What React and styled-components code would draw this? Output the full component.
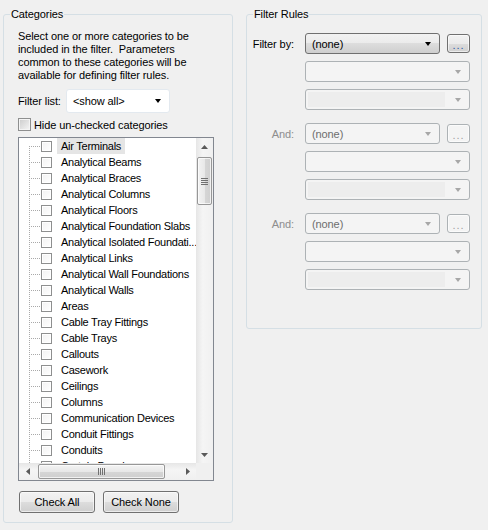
import styled, { createGlobalStyle } from 'styled-components';

const GlobalStyle = createGlobalStyle`
  html, body {
    margin: 0;
    padding: 0;
    background: #f0f0f0;
  }
  body {
    font-family: "Liberation Sans", Arial, sans-serif;
    font-size: 11px;
    letter-spacing: -0.1px;
    color: #000;
  }
`;

const Page = styled.div`
  width: 488px;
  height: 530px;
  box-sizing: border-box;
  padding: 8px 0 0 3px;

  display: flex;
  align-items: flex-start;
  gap: 13px;
`;

const Group = styled.fieldset`
  margin: 0;
  padding: 0;
  min-width: 0;
  box-sizing: border-box;
  width: ${props => props.$width}px;
  height: ${props => props.$height}px;
  border: 1px solid #d5dfe5;
  border-radius: 3px;
`;

const Legend = styled.legend`
  margin-left: 6px;
  padding: 0 1px;
  font-size: 11px;
  line-height: 13px;
  color: #000;
`;

const LeftBody = styled.div`
  padding: 9px 0 0 14px;
  display: flex;
  flex-direction: column;
`;

const Description = styled.div`
  line-height: 13px;
  white-space: pre;
`;

const FilterRow = styled.div`
  margin-top: 7px;
  display: grid;
  grid-template-columns: 48px 104px;
  align-items: center;
`;

const Combo = styled.div`
  box-sizing: border-box;
  height: ${props => props.$height || 21}px;
  display: flex;
  align-items: center;
  justify-content: space-between;
  padding: 0 8px 0 6px;
  border-radius: 3px;
  white-space: nowrap;

  ${props =>
    props.$variant === 'plain' &&
    `
    background: #ffffff;
    border: 1px solid #e3e9ef;
  `}
  ${props =>
    props.$variant === 'button' &&
    `
    background: linear-gradient(#f2f2f2 0%, #ebebeb 50%, #dddddd 50%, #cfcfcf 100%);
    border: 1px solid #707070;
  `}
  ${props =>
    props.$variant === 'disabled' &&
    `
    background: #f4f4f4;
    border: 1px solid #adb2b5;
    color: #6d6d6d;
  `}
  ${props =>
    props.$variant === 'edit' &&
    `
    background: #f4f4f4;
    border: 1px solid #adb2b5;
    padding: 2px 8px 2px 2px;
  `}
`;

const EditField = styled.div`
  align-self: stretch;
  flex: 1;
  margin-right: 10px;
  background: #ededed;
`;

const Arrow = styled.span`
  width: 0;
  height: 0;
  border-left: 3.5px solid transparent;
  border-right: 3.5px solid transparent;
  border-top: 4px solid ${props => (props.$disabled ? '#a7a7a7' : '#000')};
`;

const CheckRow = styled.label`
  margin-top: 5px;
  display: flex;
  align-items: center;
  gap: 3px;
  height: 13px;
`;

const Box = styled.span`
  box-sizing: border-box;
  display: inline-block;
  flex: none;
  width: ${props => props.$size}px;
  height: ${props => props.$size}px;
  border: 1px solid #8e8f8f;
  background: ${props =>
    props.$shaded
      ? 'linear-gradient(135deg, #cbcbcb, #f6f6f6)'
      : 'linear-gradient(135deg, #f2f2f2, #ffffff)'};
  box-shadow: inset 0 0 0 1px ${props => (props.$shaded ? '#f4f4f4' : '#ffffff')};
`;

const Tree = styled.div`
  margin-top: 6px;
  box-sizing: border-box;
  width: 196px;
  height: 344px;
  border: 1px solid #828790;
  background: #ffffff;

  display: grid;
  grid-template-columns: 1fr 17px;
  grid-template-rows: 1fr 17px;
  overflow: hidden;
`;

const TreeList = styled.ul`
  margin: 0;
  padding: 0;
  list-style: none;
  overflow: hidden;
`;

const TreeRow = styled.li`
  height: 16px;
  display: flex;
  align-items: center;
  white-space: nowrap;
  letter-spacing: -0.25px;
`;

const Connector = styled.span`
  flex: none;
  margin-left: 10px;
  width: 12px;
  height: 16px;
  background:
    repeating-linear-gradient(to bottom, #a9a9a9 0 1px, transparent 1px 2px)
      left ${props => (props.$first ? '8px' : '0')} / 1px 100% no-repeat,
    repeating-linear-gradient(to right, #a9a9a9 0 1px, transparent 1px 2px)
      left 8px / 11px 1px no-repeat;
`;

const ItemLabel = styled.span`
  margin-left: 5px;
  padding: 2px 4px 1px 4px;
  line-height: 13px;
  background: ${props => (props.$selected ? '#e5e5e5' : 'transparent')};
`;

const VScroll = styled.div`
  display: flex;
  flex-direction: column;
  align-items: center;
  background: linear-gradient(to right, #e6e6e6, #f5f5f5 40%, #f0f0f0);
`;

const HScroll = styled.div`
  display: flex;
  align-items: center;
  background: linear-gradient(#e6e6e6, #f5f5f5 40%, #f0f0f0);
`;

const Corner = styled.div`
  background: #f0f0f0;
`;

const ScrollArrow = styled.div`
  flex: none;
  width: 17px;
  height: 17px;
  display: flex;
  align-items: center;
  justify-content: center;
`;

const Thumb = styled.div`
  box-sizing: border-box;
  display: flex;
  align-items: center;
  justify-content: center;
  border: 1px solid #979797;
  border-radius: 2px;
  ${props =>
    props.$vertical
      ? `
    width: 15px;
    height: 48px;
    margin-top: 2px;
    background: linear-gradient(to right, #f3f3f3, #e8e8e8 50%, #d6d6d6 50%, #cfcfcf);
  `
      : `
    width: 127px;
    height: 15px;
    margin-left: 2px;
    background: linear-gradient(#f3f3f3, #e8e8e8 50%, #d6d6d6 50%, #cfcfcf);
  `}
  box-shadow: inset 0 0 0 1px rgba(255, 255, 255, 0.7);
`;

const Spacer = styled.div`
  flex: 1;
`;

const ButtonRow = styled.div`
  margin: 10px 0 0 1px;
  display: flex;
  gap: 8px;
`;

const Button = styled.button`
  box-sizing: border-box;
  width: ${props => props.$width || 76}px;
  height: ${props => props.$height || 22}px;
  padding: 0;
  font-family: inherit;
  font-size: 11px;
  letter-spacing: inherit;
  color: ${props => (props.$disabled ? '#838383' : '#000')};
  border: 1px solid ${props => (props.$disabled ? '#adb2b5' : '#707070')};
  border-radius: 3px;
  background: ${props =>
    props.$disabled
      ? '#f4f4f4'
      : 'linear-gradient(#f2f2f2 0%, #ebebeb 50%, #dddddd 50%, #cfcfcf 100%)'};
  box-shadow: inset 0 0 0 1px rgba(255, 255, 255, 0.6);
  line-height: 1;
`;

const RulesBody = styled.div`
  padding: 12px 10px 0 5px;
  display: flex;
  flex-direction: column;
  gap: 13px;
`;

const RuleBlock = styled.div`
  display: grid;
  grid-template-columns: 46px 135px 23px;
  column-gap: 7px;
  row-gap: 7px;
  align-items: center;
`;

const RuleLabel = styled.span`
  text-align: right;
  padding-right: 4px;
  color: ${props => (props.$disabled ? '#8d8d8d' : '#000')};
  white-space: nowrap;
`;

const Wide = styled.div`
  grid-column: 2 / 4;
`;

const Dots = styled.span`
  letter-spacing: 1px;
  color: ${props => (props.$disabled ? '#a0a0a0' : '#2a5ba8')};
  position: relative;
  top: 2px;
`;

const categories = [
  'Air Terminals',
  'Analytical Beams',
  'Analytical Braces',
  'Analytical Columns',
  'Analytical Floors',
  'Analytical Foundation Slabs',
  'Analytical Isolated Foundati...',
  'Analytical Links',
  'Analytical Wall Foundations',
  'Analytical Walls',
  'Areas',
  'Cable Tray Fittings',
  'Cable Trays',
  'Callouts',
  'Casework',
  'Ceilings',
  'Columns',
  'Communication Devices',
  'Conduit Fittings',
  'Conduits',
  'Curtain Panels',
];

const description = [
  'Select one or more categories to be',
  'included in the filter.  Parameters',
  'common to these categories will be',
  'available for defining filter rules.',
].join('\n');

function Triangle({ dir }) {
  const points = {
    up: '0,4 7,4 3.5,0',
    down: '0,0 7,0 3.5,4',
    left: '4,0 4,7 0,3.5',
    right: '0,0 0,7 4,3.5',
  }[dir];
  const vertical = dir === 'up' || dir === 'down';
  return (
    <svg width={vertical ? 7 : 4} height={vertical ? 4 : 7}>
      <polygon points={points} fill="#5a5a5a" />
    </svg>
  );
}

function Grip({ vertical }) {
  return vertical ? (
    <svg width="7" height="7">
      {[0, 2, 4, 6].map(y => (
        <rect key={y} x="0" y={y} width="7" height="1" fill="#707070" />
      ))}
    </svg>
  ) : (
    <svg width="7" height="7">
      {[0, 2, 4, 6].map(x => (
        <rect key={x} x={x} y="0" width="1" height="7" fill="#707070" />
      ))}
    </svg>
  );
}

function RuleSet({ label, disabled }) {
  return (
    <RuleBlock>
      <RuleLabel $disabled={disabled}>{label}</RuleLabel>
      <Combo $variant={disabled ? 'disabled' : 'button'}>
        <span>(none)</span>
        <Arrow $disabled={disabled} />
      </Combo>
      <Button $width={23} $height={19} $disabled={disabled}>
        <Dots $disabled={disabled}>...</Dots>
      </Button>
      <span />
      <Wide>
        <Combo $variant="disabled">
          <span />
          <Arrow $disabled />
        </Combo>
      </Wide>
      <span />
      <Wide>
        <Combo $variant="edit">
          <EditField />
          <Arrow $disabled />
        </Combo>
      </Wide>
    </RuleBlock>
  );
}

export default function App() {
  return (
    <>
      <GlobalStyle />
      <Page>
        <Group $width={230} $height={515}>
          <Legend>Categories</Legend>
          <LeftBody>
            <Description>{description}</Description>
            <FilterRow>
              <span>Filter list:</span>
              <Combo $variant="plain" $height={24}>
                <span>&lt;show all&gt;</span>
                <Arrow />
              </Combo>
            </FilterRow>
            <CheckRow>
              <Box $size={13} $shaded />
              <span>Hide un-checked categories</span>
            </CheckRow>
            <Tree>
              <TreeList>
                {categories.map((name, index) => (
                  <TreeRow key={name}>
                    <Connector $first={index === 0} />
                    <Box $size={11} />
                    <ItemLabel $selected={index === 0}>{name}</ItemLabel>
                  </TreeRow>
                ))}
              </TreeList>
              <VScroll>
                <ScrollArrow>
                  <Triangle dir="up" />
                </ScrollArrow>
                <Thumb $vertical>
                  <Grip vertical />
                </Thumb>
                <Spacer />
                <ScrollArrow>
                  <Triangle dir="down" />
                </ScrollArrow>
              </VScroll>
              <HScroll>
                <ScrollArrow>
                  <Triangle dir="left" />
                </ScrollArrow>
                <Thumb>
                  <Grip />
                </Thumb>
                <Spacer />
                <ScrollArrow>
                  <Triangle dir="right" />
                </ScrollArrow>
              </HScroll>
              <Corner />
            </Tree>
            <ButtonRow>
              <Button>Check All</Button>
              <Button>Check None</Button>
            </ButtonRow>
          </LeftBody>
        </Group>
        <Group $width={236} $height={321}>
          <Legend>Filter Rules</Legend>
          <RulesBody>
            <RuleSet label="Filter by:" />
            <RuleSet label="And:" disabled />
            <RuleSet label="And:" disabled />
          </RulesBody>
        </Group>
      </Page>
    </>
  );
}
